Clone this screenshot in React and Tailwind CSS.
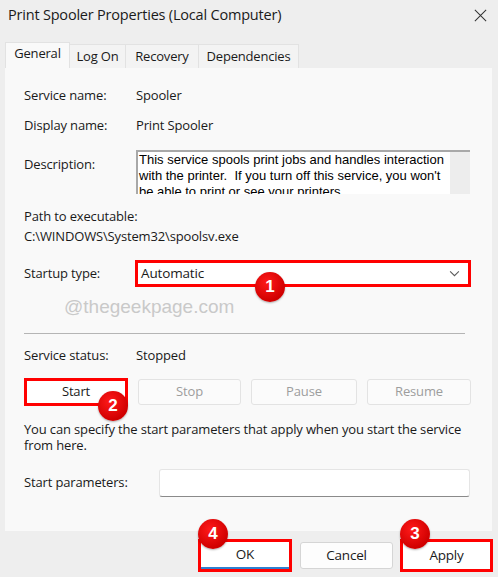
export default function App() {
  const ui = { fontFamily: '"Open Sans", "Noto Sans", Arial, sans-serif' };
  const classic = { fontFamily: '"Liberation Sans", Arial, sans-serif' };

  const Badge = ({ n, className }) => (
    <div
      className={`absolute w-[30px] h-[30px] rounded-full bg-[radial-gradient(circle_at_40%_35%,#ff1a1a,#d00000_70%)] text-white font-bold text-[17px] flex items-center justify-center shadow-[0_1px_2px_rgba(0,0,0,0.3)] ${className}`}
      style={classic}
    >
      {n}
    </div>
  );

  return (
    <div className="relative w-[498px] h-[577px] bg-[#eeeeee] text-[#1a1a1a] overflow-hidden flex flex-col" style={ui}>
      {/* Title bar */}
      <div className="h-[29px] flex items-center justify-between pl-[8px] pr-[10px]">
        <span className="text-[14.5px] tracking-[-0.2px] text-[#1a1a1a]">Print Spooler Properties (Local Computer)</span>
        <svg viewBox="0 0 16 16" className="w-[15px] h-[15px] mt-[1px]" aria-hidden="true">
          <path d="M2 2 14 14M14 2 2 14" stroke="#333" strokeWidth="1.1" fill="none" />
        </svg>
      </div>

      {/* Tabs */}
      <div className="mt-[13px] ml-[5px] flex items-end h-[26px] text-[13px] tracking-[-0.2px]">
        <div className="w-[65px] h-[26px] bg-[#f9f9f9] border-t border-l border-r border-[#e2e2e2] flex items-center justify-center pb-[3px]">
          General
        </div>
        <div className="w-[56px] h-[24px] bg-[#f3f3f3] border-t border-r border-[#e2e2e2] flex items-center justify-center">
          Log On
        </div>
        <div className="w-[73px] h-[24px] bg-[#f3f3f3] border-t border-r border-[#e2e2e2] flex items-center justify-center">
          Recovery
        </div>
        <div className="w-[100px] h-[24px] bg-[#f3f3f3] border-t border-r border-[#e2e2e2] flex items-center justify-center">
          Dependencies
        </div>
      </div>

      {/* Panel */}
      <div className="ml-[5px] w-[487px] h-[463px] shrink-0 bg-[#f9f9f9] pl-[19px] flex flex-col text-[13px] tracking-[-0.15px]">
        <div className="mt-[18px] h-[20px] flex items-center">
          <span className="w-[112px]">Service name:</span>
          <span>Spooler</span>
        </div>
        <div className="mt-[10px] h-[20px] flex items-center">
          <span className="w-[112px]">Display name:</span>
          <span>Print Spooler</span>
        </div>
        <div className="mt-[14px] flex items-start">
          <span className="w-[112px] h-[20px] mt-[5px] flex items-center">Description:</span>
          <div className="w-[334px] h-[44px] bg-white border-t-2 border-l-2 border-[#a8a8a8] flex overflow-hidden">
            <div className="flex-1 pl-[1px] text-[13px] leading-[16px] tracking-normal text-black" style={classic}>
              This service spools print jobs and handles interaction with the printer.&nbsp; If you turn off this service, you won't be able to print or see your printers.
            </div>
            <div className="w-[20px] bg-[#ededed]" />
          </div>
        </div>
        <div className="mt-[13px] h-[20px] flex items-center">Path to executable:</div>
        <div className="h-[20px] flex items-center">C:\WINDOWS\System32\spoolsv.exe</div>
        <div className="mt-[13px] flex items-center">
          <span className="w-[111px]">Startup type:</span>
          <div className="w-[336px] h-[27px] border-[3px] border-[#ff0000] bg-white flex items-center justify-between pl-[3px] pr-[8px]">
            <span className="text-[13.5px]">Automatic</span>
            <svg viewBox="0 0 12 8" className="w-[11px] h-[7px]" aria-hidden="true">
              <path d="M1 1.5 6 6.5 11 1.5" stroke="#5a5a5a" strokeWidth="1.2" fill="none" />
            </svg>
          </div>
        </div>
        <div className="mt-[8px] h-[24px] pl-[40px] flex items-center text-[19px] tracking-normal text-[#c9c9c9]" style={classic}>
          @thegeekpage.com
        </div>
        <div className="mt-[14px] w-[441px] h-px bg-[#b5b5b5]" />
        <div className="mt-[12px] h-[20px] flex items-center">
          <span className="w-[112px]">Service status:</span>
          <span>Stopped</span>
        </div>
        <div className="mt-[12px] flex items-center gap-[10px] h-[28px]">
          <div className="w-[104px] h-[28px] border-[3px] border-[#ff0000] bg-white flex items-center justify-center">
            Start
          </div>
          <div className="w-[103px] h-[26px] border border-[#e3e3e3] bg-[#fbfbfb] rounded-[3px] flex items-center justify-center text-[#9d9d9d]">
            Stop
          </div>
          <div className="w-[106px] h-[26px] border border-[#e3e3e3] bg-[#fbfbfb] rounded-[3px] flex items-center justify-center text-[#9d9d9d]">
            Pause
          </div>
          <div className="w-[104px] h-[26px] border border-[#e3e3e3] bg-[#fbfbfb] rounded-[3px] flex items-center justify-center text-[#9d9d9d]">
            Resume
          </div>
        </div>
        <p className="mt-[15px] w-[440px] leading-[16px]">
          You can specify the start parameters that apply when you start the service from here.
        </p>
        <div className="mt-[16px] flex items-center">
          <span className="w-[135px]">Start parameters:</span>
          <div className="w-[311px] h-[28px] bg-white border border-[#e5e5e5] border-b-[#8a8a8a] rounded-[3px]" />
        </div>
      </div>

      {/* Bottom buttons */}
      <div className="mt-[8px] ml-[198px] flex items-center h-[33px] text-[13.5px] tracking-[-0.2px]">
        <div className="w-[94px] h-[33px] border-[3px] border-[#ff0000] bg-white flex flex-col">
          <div className="flex-1 flex items-center justify-center">OK</div>
          <div className="h-[2px] bg-[#2f7fd0]" />
        </div>
        <div className="ml-[8px] w-[93px] h-[27px] border border-[#d5d5d5] bg-[#fdfdfd] rounded-[3px] flex items-center justify-center">
          Cancel
        </div>
        <div className="ml-[7px] w-[93px] h-[33px] border-[3px] border-[#ff0000] bg-white flex items-center justify-center">
          Apply
        </div>
      </div>

      <Badge n="1" className="left-[255px] top-[272px]" />
      <Badge n="2" className="left-[98px] top-[391px]" />
      <Badge n="3" className="left-[400px] top-[519px]" />
      <Badge n="4" className="left-[198px] top-[519px]" />
    </div>
  );
}
